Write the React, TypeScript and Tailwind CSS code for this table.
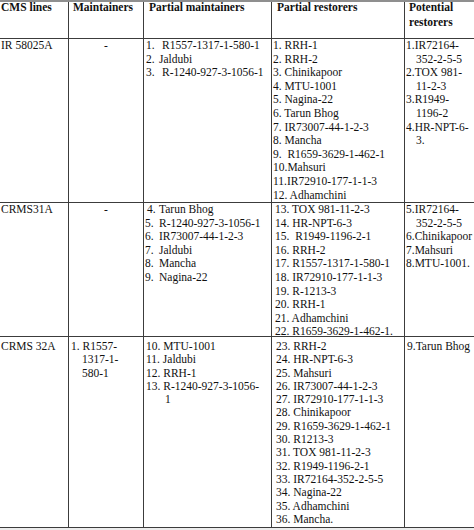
import type { ReactNode } from "react";

const line = "border-[#3c3c3c]";

function Cell({
  first,
  h,
  className = "",
  children,
}: {
  first?: boolean;
  h: string;
  className?: string;
  children?: ReactNode;
}) {
  return (
    <div className={`${h} border-b ${line} ${first ? "" : "border-l"} overflow-visible ${className}`}>
      {children}
    </div>
  );
}

// plain numbered lines, written out as they appear
function Lines({ items }: { items: string[] }) {
  return (
    <>
      {items.map((t, i) => (
        <div key={i} className="whitespace-pre">
          {t}
        </div>
      ))}
    </>
  );
}

// numbered item with a marker box
function Item({ n, w, children }: { n: string; w: string; children: ReactNode }) {
  return (
    <div className="flex whitespace-pre">
      <span className={`${w} shrink-0`}>{n}</span>
      <span>{children}</span>
    </div>
  );
}

const row1Restorers = [
  "1. RRH-1",
  "2. RRH-2",
  "3. Chinikapoor",
  "4. MTU-1001",
  "5. Nagina-22",
  "6. Tarun Bhog",
  "7. IR73007-44-1-2-3",
  "8. Mancha",
  "9.  R1659-3629-1-462-1",
  "10.Mahsuri",
  "11.IR72910-177-1-1-3",
  "12. Adhamchini",
];

const row2Restorers = [
  "13. TOX 981-11-2-3",
  "14. HR-NPT-6-3",
  "15.  R1949-1196-2-1",
  "16. RRH-2",
  "17. R1557-1317-1-580-1",
  "18. IR72910-177-1-1-3",
  "19. R-1213-3",
  "20. RRH-1",
  "21. Adhamchini",
  "22. R1659-3629-1-462-1.",
];

const row3Restorers = [
  "23. RRH-2",
  "24. HR-NPT-6-3",
  "25. Mahsuri",
  "26. IR73007-44-1-2-3",
  "27. IR72910-177-1-1-3",
  "28. Chinikapoor",
  "29. R1659-3629-1-462-1",
  "30. R1213-3",
  "31. TOX 981-11-2-3",
  "32. R1949-1196-2-1",
  "33. IR72164-352-2-5-5",
  "34. Nagina-22",
  "35. Adhamchini",
  "36. Mancha.",
];

export default function App() {
  const r1 = "h-[164px] leading-[13.6px]";
  const r2 = "h-[134px] leading-[13.6px]";
  const r3 = "h-[191px] leading-[13.3px] pt-[3px]";

  return (
    <div className="w-[474px] h-[530px] overflow-hidden bg-white text-[#111111] text-[11.5px] font-['Liberation_Serif','Times_New_Roman',serif]">
      <div className="border-t-2 border-[#8f8f8f] grid grid-cols-[68px_75px_128px_133px_70px]">
        {/* header */}
        <Cell first h="h-[37px]" className="font-bold leading-[15px]">
          <div className="-mt-[2px] pl-[1px]">CMS lines</div>
        </Cell>
        <Cell h="h-[37px]" className="font-bold leading-[15px]">
          <div className="-mt-[2px] pl-[4px]">Maintainers</div>
        </Cell>
        <Cell h="h-[37px]" className="font-bold leading-[15px]">
          <div className="-mt-[2px] pl-[5px]">Partial maintainers</div>
        </Cell>
        <Cell h="h-[37px]" className="font-bold leading-[15px]">
          <div className="-mt-[2px] pl-[5px]">Partial restorers</div>
        </Cell>
        <Cell h="h-[37px]" className="font-bold leading-[15px]">
          <div className="-mt-[2px] pl-[4px]">
            <div>Potential</div>
            <div>restorers</div>
          </div>
        </Cell>

        {/* IR 58025A */}
        <Cell first h={r1} className="pl-[1px]">
          IR 58025A
        </Cell>
        <Cell h={r1} className="text-center">
          -
        </Cell>
        <Cell h={r1} className="pl-[2px]">
          <Item n="1." w="w-[16px]">R1557-1317-1-580-1</Item>
          <Item n="2." w="w-[13px]">Jaldubi</Item>
          <Item n="3." w="w-[16px]">R-1240-927-3-1056-1</Item>
        </Cell>
        <Cell h={r1} className="pl-[1px]">
          <Lines items={row1Restorers} />
        </Cell>
        <Cell h={r1} className="pl-[1px]">
          <div>1.IR72164-</div>
          <div className="pl-[10px]">352-2-5-5</div>
          <div>2.TOX 981-</div>
          <div className="pl-[10px]">11-2-3</div>
          <div>3.R1949-</div>
          <div className="pl-[10px]">1196-2</div>
          <div>4.HR-NPT-6-</div>
          <div className="pl-[10px]">3.</div>
        </Cell>

        {/* CRMS31A */}
        <Cell first h={r2} className="pl-[1px]">
          CRMS31A
        </Cell>
        <Cell h={r2} className="text-center">
          -
        </Cell>
        <Cell h={r2} className="pl-[1px]">
          <div className="pl-[2px]">
            <Item n="4." w="w-[12px]">Tarun Bhog</Item>
          </div>
          <Item n="5." w="w-[14px]">R-1240-927-3-1056-1</Item>
          <Item n="6." w="w-[14px]">IR73007-44-1-2-3</Item>
          <Item n="7." w="w-[14px]">Jaldubi</Item>
          <Item n="8." w="w-[14px]">Mancha</Item>
          <Item n="9." w="w-[14px]">Nagina-22</Item>
        </Cell>
        <Cell h={r2} className="pl-[3px]">
          <Lines items={row2Restorers} />
        </Cell>
        <Cell h={r2} className="pl-[1px]">
          <div>5.IR72164-</div>
          <div className="pl-[10px]">352-2-5-5</div>
          <div>6.Chinikapoor</div>
          <div>7.Mahsuri</div>
          <div>8.MTU-1001.</div>
        </Cell>

        {/* CRMS 32A */}
        <Cell first h={r3} className="pl-[1px]">
          CRMS 32A
        </Cell>
        <Cell h={r3} className="pl-[2px]">
          <div>1. R1557-</div>
          <div className="pl-[11px]">1317-1-</div>
          <div className="pl-[11px]">580-1</div>
        </Cell>
        <Cell h={r3} className="pl-[2px]">
          <div>10. MTU-1001</div>
          <div>11. Jaldubi</div>
          <div>12. RRH-1</div>
          <div>13. R-1240-927-3-1056-</div>
          <div className="pl-[19px]">1</div>
        </Cell>
        <Cell h={r3} className="pl-[4px]">
          <Lines items={row3Restorers} />
        </Cell>
        <Cell h={r3} className="pl-[2px]">
          9.Tarun Bhog
        </Cell>
      </div>
      <div className="h-[2px] bg-[#ececec]" />
    </div>
  );
}
